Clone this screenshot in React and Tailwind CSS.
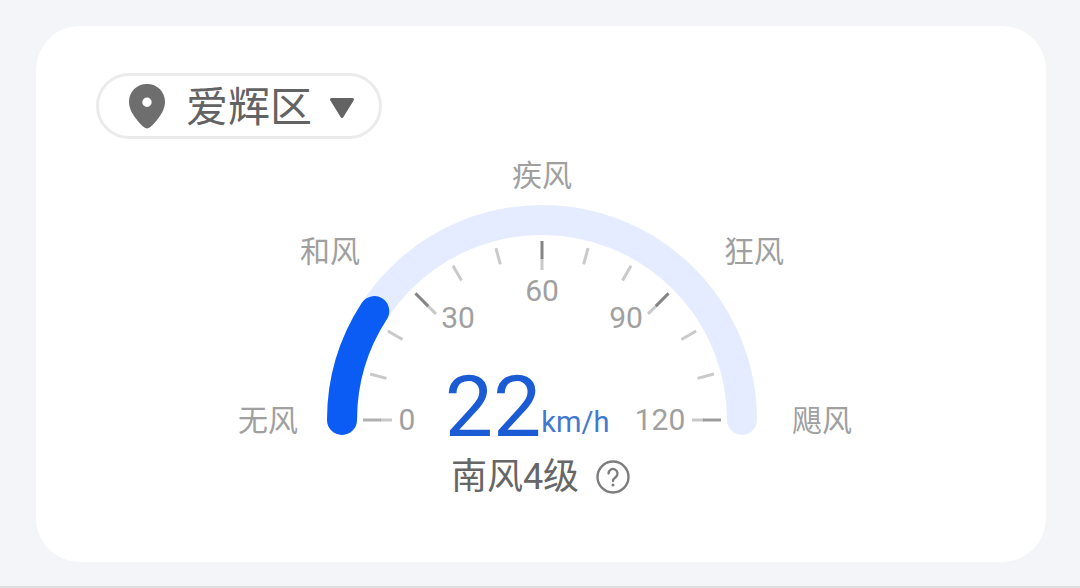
import React from "react";

const CENTER_X = 321;
const CENTER_Y = 265;
const RADIUS = 200;
const MAX_SPEED = 120;

function polar(value, radius) {
  const angle = Math.PI * (1 - value / MAX_SPEED);
  return [
    CENTER_X + radius * Math.cos(angle),
    CENTER_Y - radius * Math.sin(angle),
  ];
}

function arc(from, to) {
  const [x1, y1] = polar(from, RADIUS);
  const [x2, y2] = polar(to, RADIUS);
  return `M${x1} ${y1}A${RADIUS} ${RADIUS} 0 0 1 ${x2} ${y2}`;
}

function Tick({ value, from, to, color, width }) {
  const [x1, y1] = polar(value, from);
  const [x2, y2] = polar(value, to);
  return <line x1={x1} y1={y1} x2={x2} y2={y2} stroke={color} strokeWidth={width} />;
}

const grades = [
  { name: "无风", x: 47, y: 276 },
  { name: "和风", x: 109, y: 107 },
  { name: "疾风", x: 321, y: 31 },
  { name: "狂风", x: 533, y: 107 },
  { name: "飓风", x: 601, y: 276 },
];

const scale = [
  { value: 0, x: 186, y: 275, color: "#b0b0b0" },
  { value: 30, x: 237, y: 173, color: "#858585" },
  { value: 60, x: 321, y: 146, color: "#858585" },
  { value: 90, x: 405, y: 173, color: "#858585" },
  { value: 120, x: 439, y: 275, color: "#9c9c9c" },
];

const minorTicks = [10, 20, 40, 50, 70, 80, 100, 110];

function Gauge({ speed }) {
  return (
    <svg
      viewBox="0 0 640 290"
      className="col-start-1 row-start-1 w-full"
      role="img"
      aria-label={`${speed} km/h`}
    >
      <g fill="none" strokeWidth="30" strokeLinecap="round">
        <path d={arc(0, MAX_SPEED)} stroke="#e6ecff" />
        <path d={arc(0, speed)} stroke="#0b5cf5" />
      </g>
      {minorTicks.map((v) => (
        <Tick key={v} value={v} from={178} to={161} color="#c9c9c9" width={3} />
      ))}
      {scale.map((s) => (
        <g key={s.value}>
          <Tick value={s.value} from={162} to={150} color="#c8c8c8" width={3} />
          <Tick value={s.value} from={179} to={161} color={s.color} width={3} />
          <text x={s.x} y={s.y} textAnchor="middle" className="fill-[#a0a0a0] text-[30px]">
            {s.value}
          </text>
        </g>
      ))}
      {grades.map((g) => (
        <text key={g.name} x={g.x} y={g.y} textAnchor="middle" className="fill-[#a0a0a0] text-[30px]">
          {g.name}
        </text>
      ))}
    </svg>
  );
}

function RegionPicker() {
  return (
    <label className="flex h-[66px] w-fit items-center rounded-full border-3 border-[#ebebeb] pr-6 pl-[29px]">
      <svg viewBox="0 0 38 46" className="h-[46px] w-[38px]" aria-hidden="true">
        <path
          fillRule="evenodd"
          fill="#6e6e6e"
          d="M19 1C8.8 1 1 8.8 1 18.500c0 6.500 3 11.800 6.500 16.500 2.700 3.600 5.800 7 8.500 9.300 1.800 1.500 4.200 1.500 6 0 2.700-2.300 5.800-5.700 8.500-9.300C34 30.300 37 25 37 18.500 37 8.800 29.200 1 19 1Zm0 13.500a4.700 4.700 0 1 1 0 9.400a4.700 4.700 0 0 1 0-9.400Z"
        />
      </svg>
      <select
        aria-label="地区"
        className="ml-5 h-[60px] cursor-pointer appearance-none bg-transparent pb-1.5 text-[42px] text-[#636363] outline-none"
      >
        <option>爱辉区</option>
      </select>
      <svg viewBox="0 0 26 22" className="mt-1 ml-4 h-[22px] w-[26px]" aria-hidden="true">
        <path
          fill="#636363"
          stroke="#636363"
          strokeWidth="3"
          strokeLinejoin="round"
          d="M2.500 2.500H23.500L13 19.500Z"
        />
      </svg>
    </label>
  );
}

export default function App() {
  return (
    <main className="min-h-screen border-b-2 border-[#dcdddf] bg-[#f3f5f8] pt-[26px] pr-[34px] pb-6 pl-9 font-[Roboto,'Noto_Sans_CJK_SC',sans-serif]">
      <section className="rounded-[44px] bg-white pt-[47px] pb-[63px]">
        <div className="px-[60px]">
          <RegionPicker />
        </div>
        <div className="mx-auto mt-4 grid max-w-[640px]">
          <Gauge speed={22} />
          <p className="col-start-1 row-start-1 flex items-end justify-center self-end pr-7 text-[#1b5bd3]">
            <span className="text-[86px] leading-[76px]">22</span>
            <span className="text-[29px] leading-[46px] text-[#4378cf]">km/h</span>
          </p>
        </div>
        <div className="mt-2.5 flex h-11 items-center justify-center gap-4">
          <p className="text-[36px] leading-[44px] text-[#666666]">南风4级</p>
          <button type="button" aria-label="风力等级说明" className="cursor-pointer">
            <svg viewBox="0 0 36 36" className="size-9" fill="none" stroke="#7d7d7d" strokeLinecap="round" aria-hidden="true">
              <circle cx="18" cy="18" r="15.500" strokeWidth="2.400" />
              <path d="M13.500 14.500a4.500 4.500 0 1 1 7.300 3.500c-1.700 1.400-2.800 2-2.800 4" strokeWidth="2.300" />
              <circle cx="18" cy="26" r="1.500" fill="#7d7d7d" stroke="none" />
            </svg>
          </button>
        </div>
      </section>
    </main>
  );
}
